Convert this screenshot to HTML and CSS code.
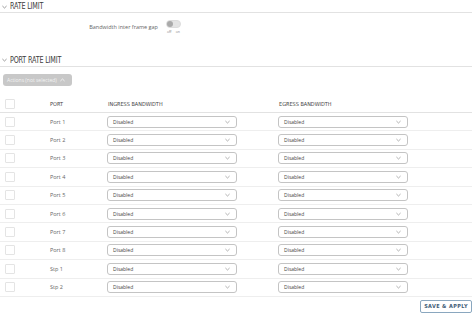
FILE: index.html
```html
<!DOCTYPE html>
<html lang="en">
<head>
<meta charset="UTF-8">
<meta name="viewport" content="width=device-width, initial-scale=1.0">
<title>Rate Limit</title>
<link rel="stylesheet" href="styles.css">
</head>
<body>

<div class="page">
  <div class="section-title">
    <svg class="chev" viewBox="0 0 6 4" width="5" height="4"><path d="M0.5 0.8 L3 3.2 L5.5 0.8" fill="none" stroke="#666" stroke-width="0.8"/></svg>
    <span class="title-text">RATE LIMIT</span>
  </div>
  <div class="toggle-row">
    <span class="toggle-label">Bandwidth inter frame gap</span>
    <div class="toggle">
      <div class="track"><div class="knob"></div></div>
      <div class="toggle-text"><span>off</span><span>on</span></div>
    </div>
  </div>

  <div class="section-title second">
    <svg class="chev" viewBox="0 0 6 4" width="5" height="4"><path d="M0.5 0.8 L3 3.2 L5.5 0.8" fill="none" stroke="#666" stroke-width="0.8"/></svg>
    <span class="title-text">PORT RATE LIMIT</span>
  </div>

  <button class="actions-btn">Actions (not selected)
    <svg viewBox="0 0 6 4" width="5" height="4"><path d="M0.5 3.2 L3 0.8 L5.5 3.2" fill="none" stroke="#fff" stroke-width="0.9"/></svg>
  </button>

  <div class="table" id="table">
    <div class="row head">
      <div class="cell"><span class="check"></span></div>
      <div class="cell">PORT</div>
      <div class="cell">INGRESS BANDWIDTH</div>
      <div class="cell">EGRESS BANDWIDTH</div>
    </div>
  </div>

  <div class="footer">
    <button class="save-btn">SAVE &amp; APPLY</button>
  </div>
</div>

<script>
  const table = document.getElementById("table");
  const ports = ["Port 1", "Port 2", "Port 3", "Port 4", "Port 5", "Port 6", "Port 7", "Port 8", "Stp 1", "Stp 2"];
  const chevron = '<svg viewBox="0 0 6 4" width="5" height="4"><path d="M0.5 0.8 L3 3.2 L5.5 0.8" fill="none" stroke="#777" stroke-width="0.7"/></svg>';

  ports.forEach(name => {
    const row = document.createElement("div");
    row.className = "row";
    row.innerHTML =
      '<div class="cell"><span class="check"></span></div>' +
      '<div class="cell port">' + name + '</div>' +
      '<div class="cell"><div class="select"><span>Disabled</span>' + chevron + '</div></div>' +
      '<div class="cell"><div class="select"><span>Disabled</span>' + chevron + '</div></div>';
    table.appendChild(row);
  });
</script>

</body>
</html>
```

FILE: styles.css
```css
body {
  margin: 0;
  background-color: #fff;
  font-family: "Open Sans", Arial, sans-serif;
  color: #555;
}
.page {
  width: 472px;
}
.section-title {
  display: flex;
  align-items: center;
  gap: 3px;
  height: 12px;
  padding-left: 2px;
  border-bottom: 1px solid #e2e2e2;
  font-family: "DejaVu Sans Condensed", "DejaVu Sans", sans-serif;
  font-size: 8.5px;
  color: #3a3a3a;
}
.title-text {
  display: inline-block;
  transform: scaleX(0.84);
  transform-origin: left center;
  letter-spacing: -0.2px;
}
.section-title.second {
  margin-top: 14px;
  height: 13px;
}
.chev {
  margin-top: 1px;
}
.toggle-row {
  display: flex;
  align-items: flex-start;
  padding-top: 9px;
  box-sizing: border-box;
  height: 26px;
}
.toggle-label {
  width: 158px;
  text-align: right;
  font-size: 5.5px;
  color: #666;
  padding-top: 1px;
}
.toggle {
  margin-left: 8px;
  margin-top: -2px;
}
.track {
  width: 15px;
  height: 8px;
  border-radius: 4px;
  background-color: #e4e4e4;
  border: 1px solid #ddd;
  box-sizing: border-box;
  position: relative;
}
.knob {
  position: absolute;
  left: 0;
  top: 0;
  width: 6px;
  height: 6px;
  border-radius: 50%;
  background-color: #aaa;
}
.toggle-text {
  display: flex;
  justify-content: space-between;
  font-size: 3.5px;
  color: #888;
  padding: 1px 1px 0;
}
.actions-btn {
  display: flex;
  align-items: center;
  gap: 3px;
  margin: 7px 0 0 3px;
  height: 12px;
  width: 69px;
  padding: 0 4px;
  border: none;
  border-radius: 3px;
  background-color: #c8c8c8;
  color: #f4f4f4;
  font-family: "Open Sans", Arial, sans-serif;
  font-size: 5px;
}
.table {
  margin-top: 9px;
}
.row {
  display: grid;
  grid-template-columns: 47px 58px 171px 1fr;
  align-items: center;
  height: 18.4px;
  box-sizing: border-box;
  border-bottom: 1px solid #eee;
}
.row.head {
  height: 18px;
  border-bottom: 1px solid #e2e2e2;
  font-family: "DejaVu Sans Condensed", "DejaVu Sans", sans-serif;
  font-size: 5.5px;
  color: #444;
}
.row.head .cell:nth-child(n+2) {
  padding-left: 3px;
}
.cell {
  display: flex;
  align-items: center;
}
.check {
  display: block;
  width: 8px;
  height: 8px;
  margin-left: 5px;
  border: 1px solid #e4e4e4;
  border-radius: 1px;
}
.port {
  padding-left: 3px;
  font-size: 5.5px;
  color: #666;
}
.select {
  display: flex;
  align-items: center;
  justify-content: space-between;
  margin-left: 2px;
  width: 130px;
  height: 12px;
  padding: 0 6px 0 5px;
  box-sizing: border-box;
  border: 1px solid #c4c4c4;
  border-radius: 3px;
  font-size: 5px;
  color: #444;
}
.footer {
  display: flex;
  justify-content: flex-end;
  padding-top: 3px;
}
.save-btn {
  width: 52px;
  height: 13px;
  padding: 0;
  border: 1px solid #8aa7bf;
  border-radius: 2px;
  background-color: #fff;
  color: #3f5d78;
  font-family: "DejaVu Sans Condensed", "DejaVu Sans", sans-serif;
  font-weight: bold;
  font-size: 5.5px;
  letter-spacing: 0.4px;
}
```
